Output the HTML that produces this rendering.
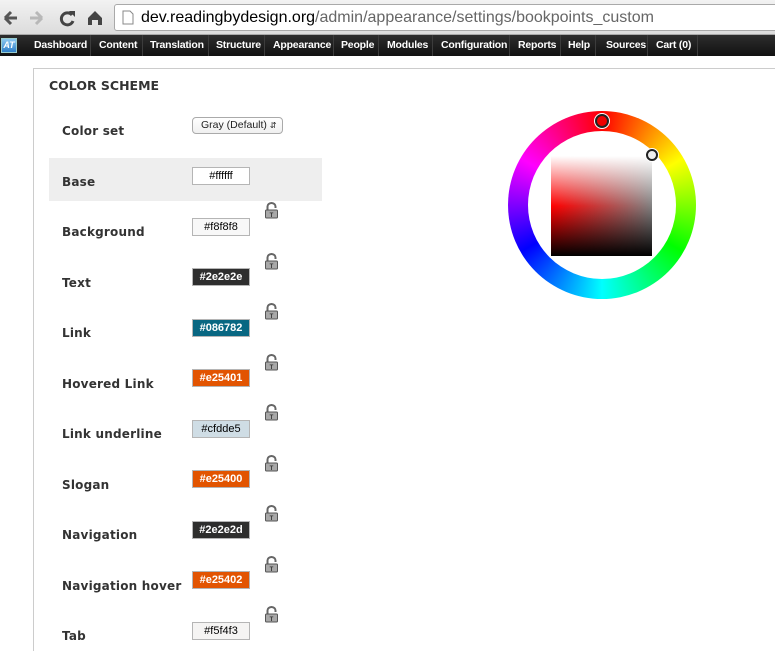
<!DOCTYPE html>
<html><head><meta charset="utf-8">
<style>
*{margin:0;padding:0;box-sizing:border-box}
html,body{width:775px;height:651px;overflow:hidden}
body{background:#fff;position:relative;font-family:"DejaVu Sans","Liberation Sans",sans-serif}
.tb{position:absolute;left:0;top:0;width:775px;height:35px;background:linear-gradient(#f2f2f2,#dcdcdc);border-bottom:1px solid #a8a8a8}
.addr{position:absolute;left:114px;top:4px;width:700px;height:27px;background:#fff;border:1px solid #a9a9a9;border-radius:3px;font-family:"Liberation Sans",sans-serif;font-size:16px;line-height:25px;padding-left:26px;color:#000}
.addr span{color:#666}
.nav{position:absolute;left:0;top:35px;width:775px;height:21px;background:linear-gradient(#2d2d2d,#111)}
.nav a{position:absolute;top:0;height:21px;line-height:21px;color:#fff;font-family:"Liberation Sans",sans-serif;font-weight:bold;font-size:10.5px;letter-spacing:-0.2px;text-decoration:none}
.sep{position:absolute;top:0;width:1px;height:21px;background:#3c3c3c}
.box{position:absolute;left:33px;top:68px;width:742px;height:583px;border-left:1px solid #ccc;border-top:1px solid #ccc}
h2{position:absolute;left:49px;top:78px;font-size:12.5px;font-weight:bold;color:#333}
.lbl{position:absolute;left:62px;font-size:12px;font-weight:bold;color:#333;line-height:16px;letter-spacing:0.2px}
.inp{position:absolute;left:192px;width:58px;height:18px;border:1px solid #b5b5b5;font-family:"Liberation Sans",sans-serif;font-size:11px;text-align:center;line-height:16px}
.w{font-weight:bold;color:#fff}
.lock{position:absolute;left:264px;width:15px;height:17px}
</style></head><body>
<div class="tb">
<svg style="position:absolute;left:0;top:6px" width="110" height="24">
<path d="M5 12h12M5 12l6-6M5 12l6 6" stroke="#555" stroke-width="3" fill="none"/>
<path d="M30 12h12M42 12l-6-6M42 12l-6 6" stroke="#b8b8b8" stroke-width="3" fill="none"/>
<path d="M72 9a6 6 0 1 0 1 6" stroke="#444" stroke-width="3" fill="none"/><path d="M69 5l6 0l0 6z" fill="#444"/>
<path d="M88 12l7-7l7 7v7h-4v-5h-6v5h-4z" fill="#444"/>
</svg>
<div class="addr"><svg style="position:absolute;left:7px;top:5px" width="12" height="15"><path d="M1 1h7l3 3v10H1z" fill="#fff" stroke="#888"/></svg>dev.readingbydesign.org<span>/admin/appearance/settings/bookpoints_custom</span></div>
</div>
<div class="nav">
<div style="position:absolute;left:1px;top:3px;width:16px;height:15px;background:linear-gradient(#8cc8f0,#2f7fc8);border:1px solid #9cc;color:#fff;font:bold italic 9px 'Liberation Sans';text-align:center;line-height:13px">AT</div>
<a style="left:34px">Dashboard</a><div class="sep" style="left:90px"></div>
<a style="left:99px">Content</a><div class="sep" style="left:142px"></div>
<a style="left:150px">Translation</a><div class="sep" style="left:208px"></div>
<a style="left:216px">Structure</a><div class="sep" style="left:264px"></div>
<a style="left:273px">Appearance</a><div class="sep" style="left:333px"></div>
<a style="left:341px">People</a><div class="sep" style="left:378px"></div>
<a style="left:387px">Modules</a><div class="sep" style="left:432px"></div>
<a style="left:441px">Configuration</a><div class="sep" style="left:509px"></div>
<a style="left:518px">Reports</a><div class="sep" style="left:560px"></div>
<a style="left:568px">Help</a><div class="sep" style="left:595px"></div>
<a style="left:606px">Sources</a><div class="sep" style="left:647px"></div>
<a style="left:656px">Cart (0)</a><div class="sep" style="left:697px"></div>
</div>
<div class="box"></div>
<h2>COLOR SCHEME</h2>
<div style="position:absolute;left:49px;top:158px;width:273px;height:43px;background:#eee"></div>
<div class="lbl" style="top:123px">Color set</div>
<div style="position:absolute;left:192px;top:117px;width:91px;height:17px;border:1px solid #aaa;border-radius:4px;background:linear-gradient(#fff,#f0f0f0);font-family:'Liberation Sans';font-size:10.5px;line-height:15px;padding-left:8px;color:#222">Gray (Default) <span style="font-size:8px">&#8693;</span></div>

<div class="lbl" style="top:174px">Base</div>
<div class="inp" style="top:167px;background:#fff;color:#000">#ffffff</div>

<div class="lbl" style="top:224px">Background</div>
<div class="inp" style="top:218px;background:#f8f8f8;color:#000">#f8f8f8</div>

<div class="lbl" style="top:275px">Text</div>
<div class="inp w" style="top:268px;background:#2e2e2e">#2e2e2e</div>

<div class="lbl" style="top:325px">Link</div>
<div class="inp w" style="top:319px;background:#086782">#086782</div>

<div class="lbl" style="top:376px">Hovered Link</div>
<div class="inp w" style="top:369px;background:#e25401">#e25401</div>

<div class="lbl" style="top:426px">Link underline</div>
<div class="inp" style="top:420px;background:#cfdde5;color:#000">#cfdde5</div>

<div class="lbl" style="top:477px">Slogan</div>
<div class="inp w" style="top:470px;background:#e25400">#e25400</div>

<div class="lbl" style="top:527px">Navigation</div>
<div class="inp w" style="top:521px;background:#2e2e2d">#2e2e2d</div>

<div class="lbl" style="top:578px">Navigation hover</div>
<div class="inp w" style="top:571px;background:#e25402">#e25402</div>

<div class="lbl" style="top:628px">Tab</div>
<div class="inp" style="top:622px;background:#f5f4f3;color:#000">#f5f4f3</div>

<svg width="0" height="0" style="position:absolute"><defs><g id="lk"><path d="M3.5 8V4.5a4 3.5 0 0 1 8 0v1.5" stroke="#666" stroke-width="2" fill="none"/><rect x="1.5" y="8" width="12" height="8" rx="1" fill="#a8a8a8" stroke="#555"/><text x="7.5" y="15" font-size="6" font-weight="bold" text-anchor="middle" fill="#333" font-family="Liberation Sans">T</text></g></defs></svg>
<svg class="lock" style="top:202px"><use href="#lk"/></svg>
<svg class="lock" style="top:253px"><use href="#lk"/></svg>
<svg class="lock" style="top:303px"><use href="#lk"/></svg>
<svg class="lock" style="top:354px"><use href="#lk"/></svg>
<svg class="lock" style="top:404px"><use href="#lk"/></svg>
<svg class="lock" style="top:455px"><use href="#lk"/></svg>
<svg class="lock" style="top:505px"><use href="#lk"/></svg>
<svg class="lock" style="top:556px"><use href="#lk"/></svg>
<svg class="lock" style="top:606px"><use href="#lk"/></svg>

<div style="position:absolute;left:508px;top:111px;width:188px;height:188px;border-radius:50%;background:conic-gradient(#f00,#ff0 60deg,#0f0 120deg,#0ff 180deg,#00f 240deg,#f0f 300deg,#f00 360deg)"></div>
<div style="position:absolute;left:528px;top:131px;width:148px;height:148px;border-radius:50%;background:#fff"></div>
<div style="position:absolute;left:551px;top:156px;width:101px;height:100px;background:linear-gradient(to bottom,#fff 0%,rgba(255,255,255,0) 50%,rgba(0,0,0,0) 50%,#000 100%),linear-gradient(to right,#f00,#808080)"></div>
<div style="position:absolute;left:595px;top:114px;width:14px;height:14px;border-radius:50%;background:#e00;border:2px solid #222;box-shadow:0 0 0 1px #fff"></div>
<div style="position:absolute;left:646px;top:149px;width:12px;height:12px;border-radius:50%;background:#eee;border:2px solid #222;box-shadow:0 0 0 1px #fff"></div>
</body></html>
